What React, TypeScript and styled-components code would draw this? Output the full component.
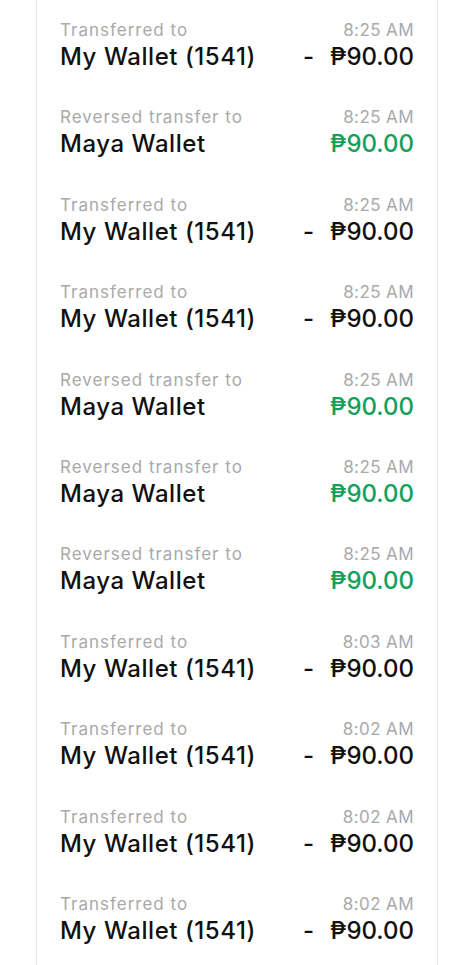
import React from 'react';
import styled, { createGlobalStyle } from 'styled-components';

interface Txn {
    label: string;
    name: string;
    time: string;
    amount: string;
    credit?: boolean;
}

const GlobalStyle = createGlobalStyle`
    body {
        margin: 0;
        background: #ffffff;
        font-family: Inter, "Noto Sans", sans-serif;
    }
`;

const Card = styled.div`
    margin: 0 36px 0 36px;
    border-left: 1px solid #e8e8e8;
    border-right: 1px solid #e8e8e8;
    padding: 0 23px 0 23px;
    min-height: 965px;
    box-sizing: border-box;
`;

const Row = styled.div`
    height: 87.4px;
    padding-top: 20px;
    box-sizing: border-box;
`;

const Line = styled.div`
    display: flex;
    justify-content: space-between;
    align-items: baseline;
`;

const Label = styled.span`
    font-size: 17px;
    line-height: 20px;
    color: #a9a9a9;
    letter-spacing: 1px;
`;

const Time = styled(Label)`
    letter-spacing: 0.4px;
`;

const Name = styled.span`
    font-size: 24px;
    line-height: 29px;
    margin-top: 2px;
    color: #111111;
    font-weight: 500;
    letter-spacing: 0.55px;
`;

const Amount = styled.span<{ credit?: boolean }>`
    display: flex;
    gap: 16px;
    font-size: 24px;
    line-height: 29px;
    margin-top: 2px;
    font-weight: 500;
    color: ${props => props.credit ? '#12a05b' : '#111111'};
`;

const rows: Array<Txn> = [
    { label: 'Transferred to', name: 'My Wallet (1541)', time: '8:25 AM', amount: '₱90.00' },
    { label: 'Reversed transfer to', name: 'Maya Wallet', time: '8:25 AM', amount: '₱90.00', credit: true },
    { label: 'Transferred to', name: 'My Wallet (1541)', time: '8:25 AM', amount: '₱90.00' },
    { label: 'Transferred to', name: 'My Wallet (1541)', time: '8:25 AM', amount: '₱90.00' },
    { label: 'Reversed transfer to', name: 'Maya Wallet', time: '8:25 AM', amount: '₱90.00', credit: true },
    { label: 'Reversed transfer to', name: 'Maya Wallet', time: '8:25 AM', amount: '₱90.00', credit: true },
    { label: 'Reversed transfer to', name: 'Maya Wallet', time: '8:25 AM', amount: '₱90.00', credit: true },
    { label: 'Transferred to', name: 'My Wallet (1541)', time: '8:03 AM', amount: '₱90.00' },
    { label: 'Transferred to', name: 'My Wallet (1541)', time: '8:02 AM', amount: '₱90.00' },
    { label: 'Transferred to', name: 'My Wallet (1541)', time: '8:02 AM', amount: '₱90.00' },
    { label: 'Transferred to', name: 'My Wallet (1541)', time: '8:02 AM', amount: '₱90.00' },
];

const App: React.FC = () => {
    return (
        <>
            <GlobalStyle />
            <Card>
                {rows.map((txn, i) => (
                    <Row key={i}>
                        <Line>
                            <Label>{txn.label}</Label>
                            <Time>{txn.time}</Time>
                        </Line>
                        <Line>
                            <Name>{txn.name}</Name>
                            <Amount credit={txn.credit}>
                                {!txn.credit && <span>-</span>}
                                <span>{txn.amount}</span>
                            </Amount>
                        </Line>
                    </Row>
                ))}
            </Card>
        </>
    );
}

export default App;
